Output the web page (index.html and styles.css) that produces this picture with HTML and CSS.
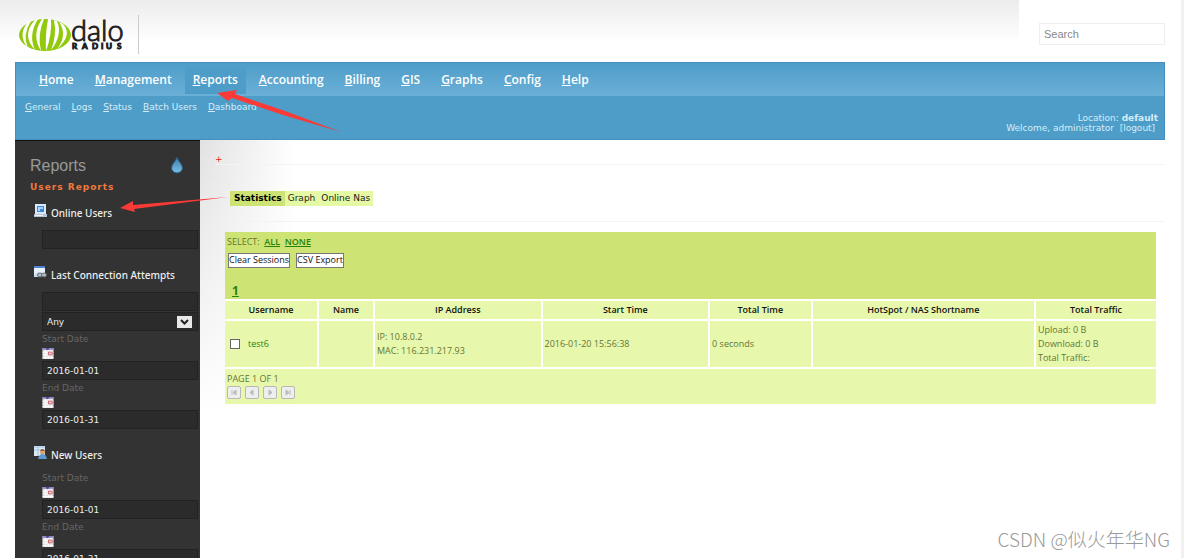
FILE: index.html
```html
<!DOCTYPE html>
<html lang="en">
<head>
<meta charset="utf-8">
<title>daloRADIUS - Online Users</title>
<link rel="stylesheet" href="styles.css">
</head>
<body>
<svg class="defs" width="0" height="0" aria-hidden="true">
  <symbol id="calendar" viewBox="0 0 12 12">
    <rect width="12" height="12" fill="#e4e1e4"/><rect width="12" height="2" fill="#8d86b8"/><rect x="4" width="3" height="2" fill="#4b46a0"/>
    <path d="M3.5 2v10M6.5 2v10M9.5 2v10M0 4.500h12M0 7.500h12M0 10.500h12" stroke="#fff" stroke-width="1"/>
    <rect x="6.500" y="4.500" width="4" height="3" fill="#f3c9cc" stroke="#c66772"/>
  </symbol>
</svg>
<div class="page">
  <header class="header">
    <a class="brand" href="#" aria-label="daloRADIUS">
      <svg width="110" height="40" viewBox="0 0 110 40">
        <ellipse cx="27" cy="20" rx="26" ry="16" fill="#92c90c"/>
        <g fill="#fff">
          <path d="M10 7Q-1 20 10 33Q4 20 13 6Z"/>
          <path d="M17 5Q3 20 17 35Q10 20 20 4Z"/>
          <path d="M24 4Q13 20 23 36Q19 20 26 4Z"/>
          <path d="M30 4Q27 20 28 36Q34 20 33 4Z"/>
          <path d="M36 5Q39 20 33 35Q45 20 39 6Z"/>
          <path d="M41 7Q50 20 39 34Q55 20 45 9Z"/>
        </g>
        <text class="logo-name" x="53" y="26">dalo</text>
        <text class="logo-sub" x="54 64 74 83 88 99" y="34">RADIUS</text>
      </svg>
    </a>
    <input class="search" type="search" placeholder="Search" aria-label="Search">
  </header>

  <div class="menu">
    <nav class="tabs">
      <a href="#"><u>H</u>ome</a><a href="#"><u>M</u>anagement</a><a class="current" href="#"><u>R</u>eports</a><a href="#"><u>A</u>ccounting</a><a href="#"><u>B</u>illing</a><a href="#"><u>G</u>IS</a><a href="#"><u>G</u>raphs</a><a href="#"><u>C</u>onfig</a><a href="#"><u>H</u>elp</a>
    </nav>
    <nav class="subtabs">
      <a href="#"><u>G</u>eneral</a><a href="#"><u>L</u>ogs</a><a href="#"><u>S</u>tatus</a><a href="#"><u>B</u>atch Users</a><a href="#"><u>D</u>ashboard</a>
    </nav>
    <div class="account">
      <p>Location: <b>default</b></p>
      <p>Welcome, administrator &nbsp;<a href="#">[logout]</a>&nbsp;</p>
    </div>
  </div>

  <div class="body">
    <aside class="sidebar">
      <div class="side-title">
        <h2>Reports</h2>
        <svg width="14" height="18" viewBox="0 0 14 18"><defs><linearGradient id="drop" x2="0" y2="1"><stop offset="0" stop-color="#3d7ba9"/><stop offset="1" stop-color="#78bfe9"/></linearGradient></defs><path d="M7 1C6 5 1.500 8 1.500 12A5.500 5 0 0 0 12.500 12C12.500 8 8 5 7 1Z" fill="url(#drop)" stroke="#255878"/></svg>
      </div>
      <h3>Users Reports</h3>

      <section class="first">
        <a class="side-link" href="#"><svg width="13" height="13" viewBox="0 0 13 13"><rect x="1" width="11" height="10" fill="#d9e8fb"/><rect x="3" y="2" width="7" height="6" fill="#3f86dc"/><path d="M4 3h5v2H6v2H4z" fill="#a9d3ff"/><path d="M0 10h13v3H0z" fill="#b8c4d4"/><path d="M1 11.500h8" stroke="#eef4fa"/></svg>Online Users</a>
        <div class="fields"><input type="text" aria-label="Online username"></div>
      </section>

      <section>
        <a class="side-link" href="#"><svg width="13" height="13" viewBox="0 0 13 13"><rect width="11" height="10" fill="#e9f1fb"/><rect width="11" height="2" fill="#4b83cc"/><path d="M0 9L5 5v6H0z" fill="#c7dbf3"/><ellipse cx="6" cy="9" rx="2.500" ry="2" fill="#b9bec5" stroke="#666c75"/><ellipse cx="10" cy="9" rx="2.500" ry="2" fill="#b9bec5" stroke="#666c75"/></svg>Last Connection Attempts</a>
        <div class="fields">
          <input type="text" aria-label="Username">
          <span class="picker"><select aria-label="Reply"><option>Any</option></select><svg width="15" height="12" viewBox="0 0 15 12"><rect width="15" height="12" fill="#e9e9e9"/><path d="M4 4l3.500 3.500L11 4" fill="none" stroke="#222" stroke-width="2"/></svg></span>
          <label for="s1">Start Date</label><svg class="cal"><use href="#calendar"/></svg><input id="s1" type="text" value="2016-01-01">
          <label for="e1">End Date</label><svg class="cal"><use href="#calendar"/></svg><input id="e1" type="text" value="2016-01-31">
        </div>
      </section>

      <section class="new-users">
        <a class="side-link" href="#"><svg width="13" height="13" viewBox="0 0 13 13"><rect width="11" height="10" fill="#dbe8f7"/><path d="M0 1h11M0 4h11M4 0v10" stroke="#a5c1e1"/><circle cx="8.500" cy="6" r="2.500" fill="#dfa36e"/><path d="M6 5Q8 1 11 5z" fill="#8b5e35"/><path d="M4 13Q5 8 8.500 8T13 13Z" fill="#5e99d0"/></svg>New Users</a>
        <div class="fields">
          <label for="s2">Start Date</label><svg class="cal"><use href="#calendar"/></svg><input id="s2" type="text" value="2016-01-01">
          <label for="e2">End Date</label><svg class="cal"><use href="#calendar"/></svg><input id="e2" type="text" value="2016-01-31">
        </div>
      </section>
    </aside>

    <main class="content">
      <div class="crumb"><a href="#">+</a></div>
      <div class="view-row"><nav class="views"><a class="active" href="#">Statistics</a><a href="#">Graph</a><a href="#">Online Nas</a></nav></div>
      <table class="sessions">
        <colgroup><col class="c-user"><col class="c-name"><col class="c-ip"><col class="c-start"><col class="c-time"><col class="c-nas"><col class="c-traffic"></colgroup>
        <thead>
          <tr class="tools"><td colspan="7">
            <p>SELECT: &nbsp;<a href="#">ALL</a> &nbsp;<a href="#">NONE</a></p>
            <div class="buttons"><button type="button">Clear Sessions</button><button type="button">CSV Export</button></div>
            <a class="page-no" href="#">1</a>
          </td></tr>
          <tr><th>Username</th><th>Name</th><th>IP Address</th><th>Start Time</th><th>Total Time</th><th>HotSpot / NAS Shortname</th><th>Total Traffic</th></tr>
        </thead>
        <tbody>
          <tr>
            <td><label class="user"><input type="checkbox"><a href="#">test6</a></label></td><td></td>
            <td>IP: 10.8.0.2<br>MAC: 116.231.217.93</td><td>2016-01-20 15:56:38</td><td>0 seconds</td><td></td>
            <td>Upload: 0 B<br>Download: 0 B<br>Total Traffic:</td>
          </tr>
        </tbody>
        <tfoot><tr><td colspan="7">
          <p>PAGE 1 OF 1</p>
          <div class="pager">
            <button type="button" aria-label="First page"><svg viewBox="0 0 12 11"><path d="M4 3v5M8 3L5 5.500L8 8Z"/></svg></button>
            <button type="button" aria-label="Previous page"><svg viewBox="0 0 12 11"><path d="M7 3L4 5.500L7 8Z"/></svg></button>
            <button type="button" aria-label="Next page"><svg viewBox="0 0 12 11"><path d="M5 3L8 5.500L5 8Z"/></svg></button>
            <button type="button" aria-label="Last page"><svg viewBox="0 0 12 11"><path d="M4 3L7 5.500L4 8ZM8 3v5"/></svg></button>
          </div>
        </td></tr></tfoot>
      </table>
    </main>
  </div>
</div>
<svg class="arrows" width="360" height="220" viewBox="0 0 360 220" aria-hidden="true" fill="#f93a37">
  <path d="M217 93L237 90L235 94L285 111L341 132L283 115L232 98L228 101Z"/>
  <path d="M120 208L133 201L133 205L228 197L134 209L135 212Z"/>
</svg>
<div class="watermark">CSDN @似火年华NG</div>
</body>
</html>
```
FILE: styles.css
```css
* { box-sizing: border-box; }
html { height: 100%; overflow: hidden; }
body {
  position: relative;
  height: 100%;
  margin: 0;
  overflow: hidden;
  border-right: 3px solid #f1f1f1;
  background: #fff;
  font: 9px/12px "DejaVu Sans", sans-serif;
}
p, h2, h3 { margin: 0; }
a { color: inherit; text-decoration: none; }
.defs { position: absolute; }
.page { padding: 0 16px 0 15px; }

.header {
  display: flex;
  justify-content: space-between;
  align-items: flex-start;
  height: 62px;
  margin-left: -15px;
  padding: 15px 0 0 18px;
  background: linear-gradient(#ececec, #fff 42px) no-repeat 0 0 / 1019px 100%;
}
.brand { height: 39px; padding-right: 10px; border-right: 1px solid #ccc; }
.brand svg { overflow: visible; }
.logo-name { font: 300 29px Lato, sans-serif; fill: #222; stroke: #222; stroke-width: 1px; }
.logo-sub { font: bold 8px Lato, sans-serif; fill: #222; stroke: #222; stroke-width: 1px; }
.search {
  width: 126px;
  height: 22px;
  margin-top: 8px;
  padding: 0 4px;
  border: 1px solid #eee;
  background: #fff;
  font: 11px "Liberation Sans", sans-serif;
}
.search::placeholder { color: #888; }

.menu { height: 78px; border: 1px solid #448fbf; background: #4e9dc9; color: #d4edf8; }
.tabs {
  display: flex;
  height: 33px;
  padding: 4px 15px 2px;
  background: linear-gradient(#4e9dc9, #6bb0d7);
  color: #fff;
  font: 600 12px/26px "Open Sans", sans-serif;
}
.tabs a { padding: 0 8px; margin-right: 5px; }
.tabs .current { background: #4e9dc9; }
.subtabs { display: flex; gap: 11px; padding: 5px 9px 0; }
.account { padding: 0 6px; line-height: 10px; text-align: right; }

.body { display: flex; align-items: flex-start; }
.sidebar {
  flex: none;
  width: 185px;
  padding: 15px 2px 20px 15px;
  border-top: 1px solid #111;
  background: #333;
  color: #eee;
}
.side-title { display: flex; justify-content: space-between; padding-right: 14px; }
.side-title h2 { color: #999; font: 16px/20px "Liberation Sans", sans-serif; }
.sidebar h3 { padding-top: 5px; color: #f0783c; font: bold 9px/12px "DejaVu Sans", sans-serif; letter-spacing: 1px; }
.sidebar section { margin-top: 17px; }
.sidebar .first { margin-top: 11px; }
.side-link { display: flex; align-items: flex-end; gap: 4px; height: 16px; padding-left: 4px; font: 500 10px/14px "Noto Sans", sans-serif; }
.side-link svg { align-self: flex-start; }
.fields { display: flex; flex-direction: column; padding: 10px 0 0 12px; }
.new-users .fields { padding-top: 8px; }
.fields input, .fields select {
  width: 100%;
  height: 19px;
  padding: 0 4px;
  border: 1px solid #222;
  background: #2b2b2b;
  color: #eee;
  font: 9px "DejaVu Sans", sans-serif;
  appearance: none;
}
.picker { position: relative; display: flex; margin-top: 1px; }
.picker svg { position: absolute; top: 4px; right: 6px; pointer-events: none; }
.fields label { color: #666; line-height: 17px; }
.cal { width: 12px; height: 11px; margin-bottom: 2px; }

.content {
  flex: 1;
  min-width: 0;
  padding: 0 9px 20px 25px;
  background:
    linear-gradient(rgba(255,255,255,0), #fff 275px),
    linear-gradient(90deg, #e2e2e2, #fff 95px);
}
.crumb { height: 25px; margin-right: -9px; margin-left: -10px; padding-top: 14px; border-bottom: 1px solid #f3f3f3; color: #e22; line-height: 10px; }
.view-row { height: 57px; margin-right: -9px; margin-bottom: 10px; padding: 26px 5px 0; border-bottom: 1px solid #f3f3f3; }
.views { display: inline-flex; background: #e5f9a5; color: #222; line-height: 15px; }
.views a { padding: 0 3px; }
.views .active { padding-left: 4px; background: #cde474; color: #000; font-weight: bold; }

.sessions {
  width: 100%;
  table-layout: fixed;
  border-collapse: collapse;
  background: #e7f8ad;
  color: #637635;
  font: 9px/14px "Open Sans", sans-serif;
}
.sessions td, .sessions th { padding: 2px; border: 2px solid #fff; }
.sessions tr > :first-child { border-left: 0; }
.sessions tr > :last-child { border-right: 0; }
.sessions th { height: 20px; color: #111; font: 600 9px/14px "Open Sans", sans-serif; }
.sessions tbody td { height: 48px; }
.sessions .tools td { height: 68px; padding-bottom: 0; border-top: 0; background: #cde474; }
.tools p a { color: #27820c; font-weight: 600; text-decoration: underline; }
.c-user { width: 10%; }
.c-name { width: 6%; }
.c-ip { width: 18%; }
.c-start { width: 18%; }
.c-time { width: 11%; }
.c-nas { width: 24%; }
.c-traffic { width: 13%; }
.buttons { display: flex; gap: 6px; padding: 4px 1px 14px; }
.buttons button { height: 15px; padding: 0; border: 1px solid #777; background: #fff; color: #111; font: 9px/12px "Open Sans", sans-serif; }
.page-no { margin-left: 5px; color: #27820c; font: bold 12px/17px "Open Sans", sans-serif; text-decoration: underline; }
.user { display: flex; align-items: center; gap: 8px; color: #27820c; }
.user input { width: 10px; height: 10px; margin: 0 0 0 3px; border: 1px solid #666; background: #fff; appearance: none; }
.sessions tfoot td { height: 36px; padding: 1px 2px 3px; border-bottom: 0; }
.pager { display: flex; gap: 4px; }
.pager button { width: 14px; height: 13px; padding: 0; border: 1px solid #b8b8b8; border-radius: 2px; background: #eee; }
.pager svg { display: block; width: 12px; height: 11px; fill: #bbb; }
.pager path { stroke: #bbb; stroke-width: 1px; }

.arrows { position: absolute; top: 0; left: 0; pointer-events: none; }
.watermark {
  position: absolute;
  right: 11px;
  bottom: 5px;
  color: #999;
  font: 19px/28px "Liberation Sans", "Noto Sans CJK SC", sans-serif;
  font-family: "Noto Sans CJK SC", sans-serif;
  font-weight: 300;
}
```
